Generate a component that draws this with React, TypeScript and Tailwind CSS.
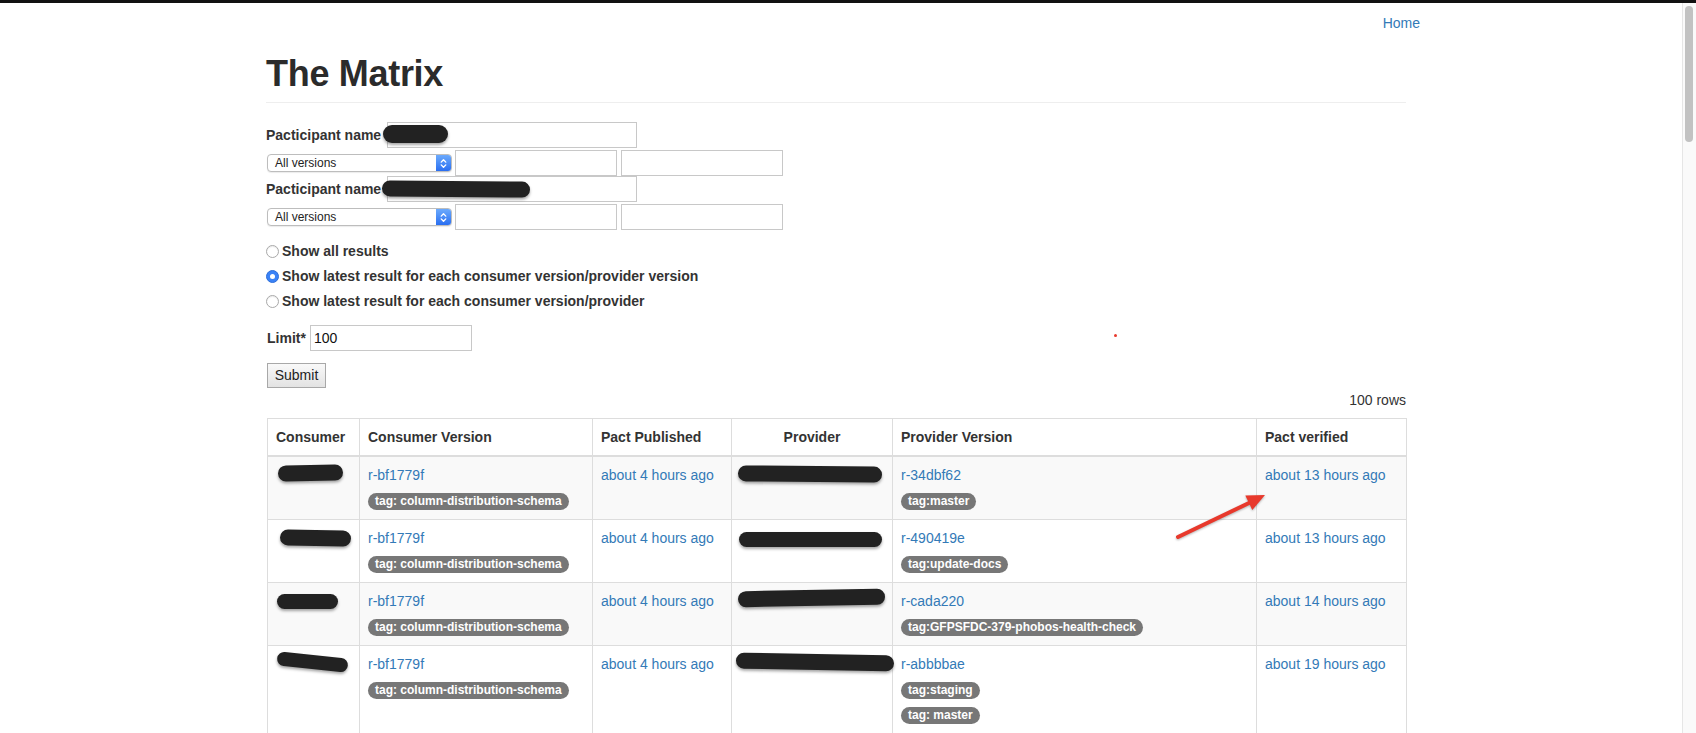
import { ChevronsUpDown } from "lucide-react"

interface MatrixRow {
  consumerVersion: string
  consumerTag: string
  published: string
  providerVersion: string
  providerTags: string[]
  verified: string
  consumerBlob: string
  providerBlob: string
}

const rows: MatrixRow[] = [
  {
    consumerVersion: "r-bf1779f",
    consumerTag: "tag: column-distribution-schema",
    published: "about 4 hours ago",
    providerVersion: "r-34dbf62",
    providerTags: ["tag:master"],
    verified: "about 13 hours ago",
    consumerBlob: "left-[2px] top-[0px] w-[65px] h-[16px] -rotate-1",
    providerBlob: "left-[-2px] top-[1px] w-[144px] h-[16px] rotate-[0.5deg]",
  },
  {
    consumerVersion: "r-bf1779f",
    consumerTag: "tag: column-distribution-schema",
    published: "about 4 hours ago",
    providerVersion: "r-490419e",
    providerTags: ["tag:update-docs"],
    verified: "about 13 hours ago",
    consumerBlob: "left-[4px] top-[2px] w-[71px] h-[16px] rotate-[1deg]",
    providerBlob: "left-[-1px] top-[4px] w-[143px] h-[15px]",
  },
  {
    consumerVersion: "r-bf1779f",
    consumerTag: "tag: column-distribution-schema",
    published: "about 4 hours ago",
    providerVersion: "r-cada220",
    providerTags: ["tag:GFPSFDC-379-phobos-health-check"],
    verified: "about 14 hours ago",
    consumerBlob: "left-[1px] top-[3px] w-[61px] h-[15px]",
    providerBlob: "left-[-2px] top-[-1px] w-[147px] h-[16px] -rotate-1",
  },
  {
    consumerVersion: "r-bf1779f",
    consumerTag: "tag: column-distribution-schema",
    published: "about 4 hours ago",
    providerVersion: "r-abbbbae",
    providerTags: ["tag:staging", "tag: master"],
    verified: "about 19 hours ago",
    consumerBlob: "left-[1px] top-[1px] w-[71px] h-[14px] rotate-[6deg]",
    providerBlob: "left-[-4px] top-[0px] w-[158px] h-[16px] rotate-[1deg]",
  },
]

function Scribble({ className }: { className: string }) {
  return (
    <div
      className={
        "absolute rounded-full bg-[#222] shadow-[0_2px_3px_rgba(0,0,0,0.35)] " + className
      }
    />
  )
}

function Badge({ children }: { children: string }) {
  return (
    <span className="block w-fit h-[17px] rounded-[10px] bg-[#777] px-[7px] text-[12px] font-bold leading-[17px] text-white whitespace-nowrap">
      {children}
    </span>
  )
}

function MacSelect() {
  return (
    <div className="flex h-[18px] w-[185px] items-stretch rounded-[4px] border border-[#bdbdbd] bg-white shadow-[0_1px_1px_rgba(0,0,0,0.08)]">
      <div className="flex-1 pl-[7px] text-[12px] leading-[16px] text-[#222]">All versions</div>
      <div className="flex w-[15px] items-center justify-center rounded-r-[3px] bg-gradient-to-b from-[#6caafc] to-[#2a6ef1]">
        <ChevronsUpDown className="h-[11px] w-[11px] text-white" strokeWidth={3} />
      </div>
    </div>
  )
}

function TextBox({ className, value }: { className: string; value?: string }) {
  return (
    <div className={"h-[26px] border border-[#c8c8c8] bg-white px-[3px] text-[14px] leading-[24px] text-[#111] " + className}>
      {value}
    </div>
  )
}

function Radio({ checked, label }: { checked?: boolean; label: string }) {
  return (
    <div className="flex h-[25px] items-center">
      {checked ? (
        <div className="flex h-[13px] w-[13px] items-center justify-center rounded-full border border-[#2f6fd9] bg-[#3a82f7]">
          <div className="h-[5px] w-[5px] rounded-full bg-white" />
        </div>
      ) : (
        <div className="h-[13px] w-[13px] rounded-full border border-[#a9a9a9] bg-white shadow-[inset_0_1px_1px_rgba(0,0,0,0.08)]" />
      )}
      <span className="ml-[3px] font-bold">{label}</span>
    </div>
  )
}

export default function App() {
  return (
    <div
      className="relative flex h-[733px] flex-col overflow-hidden bg-white text-[14px] text-[#333]"
      style={{ fontFamily: '"Liberation Sans", Arial, sans-serif' }}
    >
      <div className="h-[3px] shrink-0 bg-[#111]" />

      <div className="flex min-h-0 flex-1">
        <main className="flex-1">
          {/* nav */}
          <div className="ml-[266px] w-[1154px] pt-[10px] text-right leading-[20px]">
            <a className="text-[#337ab7]">Home</a>
          </div>

          <div className="ml-[266px] w-[1140px]">
            <div className="mt-[21px] border-b border-[#eee] pb-[8px]">
              <h1 className="text-[36px] font-bold leading-[40px] tracking-[-0.3px] text-[#2b2b2b]">The Matrix</h1>
            </div>

            {/* participant filters */}
            <div className="relative mt-[19px] flex h-[26px] items-center">
              <span className="font-bold">Pacticipant name</span>
              <TextBox className="ml-[6px] w-[250px]" />
              <Scribble className="left-[117px] top-[3px] w-[65px] h-[18px]" />
            </div>
            <div className="mt-[2px] flex h-[26px] items-center">
              <div className="ml-[1px]"><MacSelect /></div>
              <TextBox className="ml-[3px] w-[162px]" />
              <TextBox className="ml-[4px] w-[162px]" />
            </div>
            <div className="relative flex h-[26px] items-center">
              <span className="font-bold">Pacticipant name</span>
              <TextBox className="ml-[6px] w-[250px]" />
              <Scribble className="left-[116px] top-[5px] w-[148px] h-[16px] rotate-[0.5deg]" />
            </div>
            <div className="mt-[2px] flex h-[26px] items-center">
              <div className="ml-[1px]"><MacSelect /></div>
              <TextBox className="ml-[3px] w-[162px]" />
              <TextBox className="ml-[4px] w-[162px]" />
            </div>

            {/* result options */}
            <div className="mt-[9px]">
              <Radio label="Show all results" />
              <Radio checked label="Show latest result for each consumer version/provider version" />
              <Radio label="Show latest result for each consumer version/provider" />
            </div>

            <div className="mt-[11px] flex h-[26px] items-center">
              <span className="ml-[1px] font-bold">Limit*</span>
              <TextBox className="ml-[4px] w-[162px]" value="100" />
            </div>

            <button className="mt-[12px] ml-[1px] h-[25px] w-[59px] border border-[#a8a8a8] bg-gradient-to-b from-[#f9f9f9] to-[#e3e3e3] text-[14px] leading-[23px] text-[#222]">
              Submit
            </button>

            <div className="mt-[2px] text-right leading-[20px]">100 rows</div>

            {/* matrix table */}
            <table className="mt-[8px] ml-[1px] w-[1139px] table-fixed border-collapse">
              <colgroup>
                <col className="w-[92px]" />
                <col className="w-[233px]" />
                <col className="w-[139px]" />
                <col className="w-[161px]" />
                <col className="w-[364px]" />
                <col className="w-[150px]" />
              </colgroup>
              <thead>
                <tr>
                  <th className="border border-b-2 border-[#ddd] px-[8px] py-[8px] text-left leading-[20px]">Consumer</th>
                  <th className="border border-b-2 border-[#ddd] px-[8px] py-[8px] text-left leading-[20px]">Consumer Version</th>
                  <th className="border border-b-2 border-[#ddd] px-[8px] py-[8px] text-left leading-[20px]">Pact Published</th>
                  <th className="border border-b-2 border-[#ddd] px-[8px] py-[8px] text-center leading-[20px]">Provider</th>
                  <th className="border border-b-2 border-[#ddd] px-[8px] py-[8px] text-left leading-[20px]">Provider Version</th>
                  <th className="border border-b-2 border-[#ddd] px-[8px] py-[8px] text-left leading-[20px]">Pact verified</th>
                </tr>
              </thead>
              <tbody>
                {rows.map((row, i) => (
                  <tr key={i} className={i % 2 === 0 ? "bg-[#f9f9f9]" : "bg-white"}>
                    <td className="border border-[#ddd] px-[8px] pt-[8px] pb-[9px] align-top">
                      <div className="relative h-[20px]">
                        <Scribble className={row.consumerBlob} />
                      </div>
                    </td>
                    <td className="border border-[#ddd] px-[8px] pt-[8px] pb-[9px] align-top">
                      <div className="leading-[20px] text-[#337ab7]">{row.consumerVersion}</div>
                      <div className="mt-[8px] h-[17px]"><Badge>{row.consumerTag}</Badge></div>
                    </td>
                    <td className="border border-[#ddd] px-[8px] pt-[8px] pb-[9px] align-top">
                      <div className="leading-[20px] text-[#337ab7]">{row.published}</div>
                    </td>
                    <td className="border border-[#ddd] px-[8px] pt-[8px] pb-[9px] align-top">
                      <div className="relative h-[20px]">
                        <Scribble className={row.providerBlob} />
                      </div>
                    </td>
                    <td className="border border-[#ddd] px-[8px] pt-[8px] pb-[9px] align-top">
                      <div className="leading-[20px] text-[#337ab7]">{row.providerVersion}</div>
                      {row.providerTags.map((tag) => (
                        <div key={tag} className="mt-[8px] h-[17px]">
                          <Badge>{tag}</Badge>
                        </div>
                      ))}
                    </td>
                    <td className="border border-[#ddd] px-[8px] pt-[8px] pb-[9px] align-top">
                      <div className="leading-[20px] text-[#337ab7]">{row.verified}</div>
                    </td>
                  </tr>
                ))}
              </tbody>
            </table>
          </div>
        </main>

        {/* scrollbar */}
        <div className="w-[14px] shrink-0 border-l border-[#e6e6e6] bg-[#fafafa] pt-[3px]">
          <div className="ml-[2px] h-[136px] w-[8px] rounded-full bg-[#c2c2c2]" />
        </div>
      </div>

      {/* annotation */}
      <div className="absolute left-[1114px] top-[334px] h-[3px] w-[3px] rounded-full bg-[#e8392c]" />
      <svg className="absolute left-[1170px] top-[488px]" width="100" height="56" viewBox="0 0 100 56">
        <g style={{ filter: "drop-shadow(0 1px 1px rgba(0,0,0,0.3))" }}>
          <line x1="8" y1="49" x2="80" y2="14.5" stroke="#e8392c" strokeWidth="4" strokeLinecap="round" />
          <polygon points="95,7 75.3,7.6 82.3,22" fill="#e8392c" />
        </g>
      </svg>
    </div>
  )
}
